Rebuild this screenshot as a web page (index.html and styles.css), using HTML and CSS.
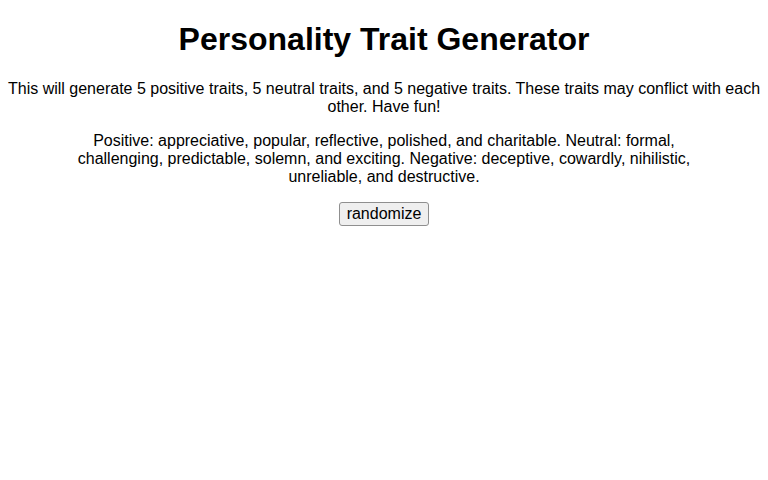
FILE: index.html
```html
<!DOCTYPE html>
<html>
  <head>
    <meta charset="utf-8">
    <title>Personality Trait Generator</title>
    <link rel="stylesheet" href="styles.css">
  </head>
  <body>
    <h1>Personality Trait Generator</h1>
    <p class="intro">This will generate 5 positive traits, 5 neutral traits, and 5 negative traits. These traits may conflict with each other. Have fun!</p>
    <p id="traits" class="traits">Positive: appreciative, popular, reflective, polished, and charitable. Neutral: formal, challenging, predictable, solemn, and exciting. Negative: deceptive, cowardly, nihilistic, unreliable, and destructive.</p>
    <div class="actions">
      <button id="randomize" class="btn">randomize</button>
    </div>
  </body>
</html>
```

FILE: styles.css
```css
body{margin:0; padding:0 8px; font-family:"Liberation Sans", Arial, sans-serif; color:#000; background:#fff; text-align:center;}
h1{font-size:32px; margin:0; padding:21px 0 22px;}
p{font-size:16px; margin:0 0 16px;}
.intro{margin:0 -4px 16px;}
.traits{max-width:640px; margin:0 auto 16px;}
.btn{font-family:"Liberation Sans", Arial, sans-serif; font-size:16px; line-height:18px; color:#000; background:#efefef; border:1px solid #8f8f8f; border-radius:3px; padding:2px 7px;}
```
